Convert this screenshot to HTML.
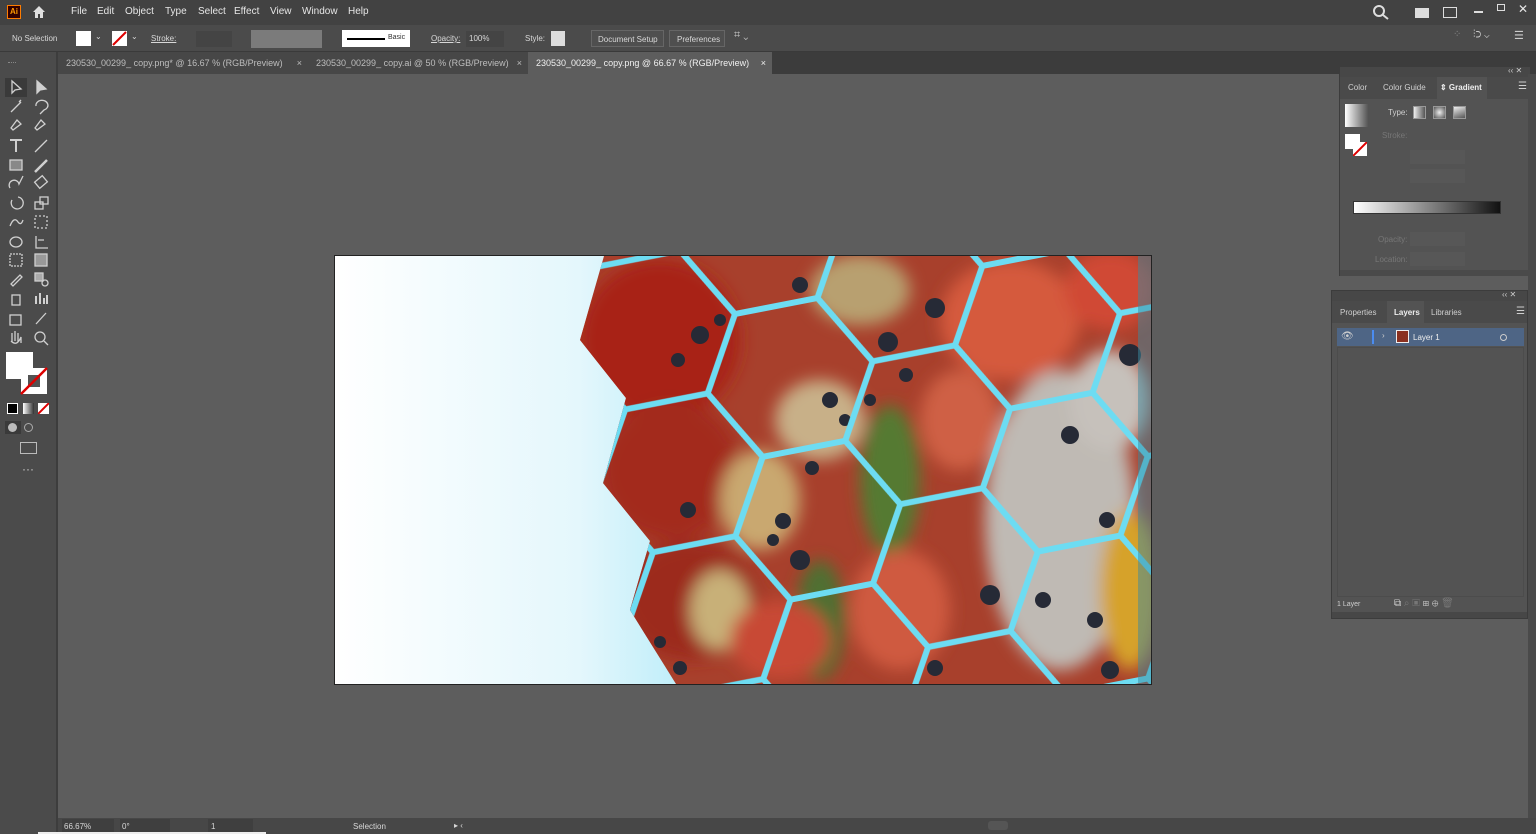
<!DOCTYPE html>
<html><head><meta charset="utf-8"><style>
*{box-sizing:border-box;margin:0;padding:0}
body{width:1536px;height:834px;overflow:hidden;background:#5d5d5d;font-family:"Liberation Sans",sans-serif;color:#ddd;position:relative}
.abs{position:absolute}
#menu{left:0;top:0;width:1536px;height:25px;background:#424242}
#menu span{position:absolute;top:6px;font-size:10px;color:#e6e6e6}
#ctrl{left:0;top:25px;width:1536px;height:27px;background:#4b4b4b;border-bottom:1px solid #3a3a3a}
.t9{font-size:8px;color:#d8d8d8}
#tabs{left:58px;top:52px;width:1478px;height:22px;background:#3c3c3c}
.tab{position:absolute;top:0;height:22px;background:#474747;font-size:9px;color:#bdbdbd;padding:6px 8px;white-space:nowrap}
#tools{left:0;top:52px;width:58px;height:782px;background:#4b4b4b;border-right:2px solid #3d3d3d}
.panel{background:#535353;border:1px solid #3c3c3c}
.ptab{position:absolute;font-size:8px;color:#cfcfcf}
#status{left:58px;top:818px;width:1478px;height:16px;background:#474747}
</style></head><body>
<div id="menu" class="abs">
 <div class="abs" style="left:7px;top:5px;width:14px;height:14px;background:#330000;border:1px solid #ff7c00;"><div style="color:#ff9a00;font-size:8px;font-weight:bold;text-align:center;line-height:12px">Ai</div></div>
 <svg class="abs" style="left:31px;top:4px" width="16" height="16"><path d="M2 8 L8 2 L14 8 L12 8 L12 14 L9 14 L9 10 L7 10 L7 14 L4 14 L4 8Z" fill="#e0e0e0"/></svg>
 <span style="left:71px">File</span><span style="left:97px">Edit</span><span style="left:125px">Object</span><span style="left:165px">Type</span><span style="left:198px">Select</span><span style="left:234px">Effect</span><span style="left:270px">View</span><span style="left:302px">Window</span><span style="left:348px">Help</span>
 <svg class="abs" style="left:1372px;top:4px" width="18" height="16"><circle cx="7" cy="7" r="5" stroke="#ddd" stroke-width="2" fill="none"/><path d="M11 11 L16 15" stroke="#ddd" stroke-width="2"/></svg>
 <div class="abs" style="left:1415px;top:8px;width:14px;height:10px;background:#ddd"></div>
 <div class="abs" style="left:1443px;top:7px;width:14px;height:11px;border:1.5px solid #ddd"></div>
 <div class="abs" style="left:1474px;top:11px;width:9px;height:1.5px;background:#ddd"></div>
 <div class="abs" style="left:1497px;top:4px;width:8px;height:7px;border:1px solid #ddd"></div>
 <span style="left:1518px;top:2px;font-size:12px">✕</span>
</div>
<div id="ctrl" class="abs">
 <span class="abs t9" style="left:12px;top:9px">No Selection</span>
 <div class="abs" style="left:76px;top:6px;width:15px;height:15px;background:#fff"></div>
 <span class="abs t9" style="left:95px;top:7px">⌄</span>
 <svg class="abs" style="left:112px;top:6px" width="15" height="15"><rect width="15" height="15" fill="#fff"/><path d="M1 14 L14 1" stroke="#d00" stroke-width="2"/></svg>
 <span class="abs t9" style="left:131px;top:7px">⌄</span>
 <span class="abs t9" style="left:151px;top:9px;text-decoration:underline">Stroke:</span>
 <div class="abs" style="left:196px;top:6px;width:36px;height:16px;background:#444"></div>
 <div class="abs" style="left:251px;top:5px;width:71px;height:18px;background:#7b7b7b"></div>
 <div class="abs" style="left:342px;top:5px;width:68px;height:17px;background:#fff"><div style="position:absolute;left:5px;top:8px;width:38px;height:2px;background:#000"></div><span style="position:absolute;left:46px;top:4px;font-size:7px;color:#333">Basic</span></div>
 <span class="abs t9" style="left:431px;top:9px;text-decoration:underline">Opacity:</span>
 <div class="abs" style="left:466px;top:6px;width:38px;height:16px;background:#444"><span class="t9" style="position:absolute;left:3px;top:3px">100%</span></div>
 <span class="abs t9" style="left:525px;top:9px">Style:</span>
 <div class="abs" style="left:551px;top:6px;width:14px;height:15px;background:#ddd"></div>
 <div class="abs" style="left:591px;top:5px;width:73px;height:17px;border:1px solid #666;background:#4f4f4f"><span class="t9" style="position:absolute;left:6px;top:4px">Document Setup</span></div>
 <div class="abs" style="left:669px;top:5px;width:56px;height:17px;border:1px solid #666;background:#4f4f4f"><span class="t9" style="position:absolute;left:7px;top:4px">Preferences</span></div>
 <span class="abs" style="left:734px;top:4px;font-size:11px;color:#ccc">⌗ ⌄</span>
 <span class="abs" style="left:1453px;top:4px;font-size:10px;color:#888">⁘</span>
 <span class="abs" style="left:1473px;top:4px;font-size:10px;color:#ccc">⫶⊃ ⌄</span>
 <span class="abs" style="left:1514px;top:4px;font-size:11px;color:#ccc">☰</span>
</div>
<div id="tools" class="abs">
 <div class="abs" style="left:8px;top:10px;width:8px;height:2px;border-top:1px dotted #888"></div>
 <svg class="abs" style="left:0;top:24px" width="56" height="420" fill="none" stroke="#d0d0d0" stroke-width="1.3">
  <rect x="5" y="2" width="22" height="19" fill="#3a3a3a" stroke="none"/>
  <path d="M12 5 L12 17 L15 14 L21 13Z"/><path d="M37 5 L37 17 L40 14 L46 13Z" fill="#d0d0d0"/>
  <path d="M11 36 L21 26 M19 26 l2 -2"/><path d="M36 30 a6 5 0 1 1 8 4 l-4 4"/>
  <path d="M11 52 L17 44 L21 48 L13 54Z"/><path d="M35 52 L41 44 L45 48 L37 54Z"/>
  <path d="M10 64 H22 M16 64 V76" stroke-width="2"/><path d="M35 76 L47 64"/>
  <rect x="10" y="84" width="12" height="10" fill="#888"/><path d="M35 96 L47 84" stroke-width="2.5"/>
  <path d="M10 112 a5 5 0 1 1 9 -4 L23 100"/><rect x="36" y="102" width="10" height="8" transform="rotate(-40 41 106)"/>
  <path d="M12 124 a6 6 0 1 0 6 -3"/><rect x="35" y="126" width="8" height="7"/><rect x="40" y="121" width="8" height="7"/>
  <path d="M10 150 q4 -10 8 -4 q3 4 5 -2"/><rect x="35" y="140" width="12" height="12" stroke-dasharray="2 2"/>
  <ellipse cx="16" cy="166" rx="6" ry="5"/><path d="M36 160 v12 h12 M38 164 h6"/>
  <rect x="10" y="178" width="12" height="12" stroke-dasharray="2 1"/><rect x="35" y="178" width="12" height="12" fill="#999"/>
  <path d="M11 208 L20 199 L22 201 L13 210Z"/><rect x="35" y="197" width="8" height="8" fill="#aaa"/><circle cx="45" cy="207" r="3"/>
  <rect x="12" y="219" width="8" height="10"/><path d="M36 228 v-8 M40 228 v-11 M44 228 v-6 M47 228 v-9" stroke-width="2"/>
  <rect x="10" y="239" width="11" height="10"/><path d="M36 248 L46 237"/>
  <path d="M12 266 v-9 M15 265 v-10 M18 266 v-9 M21 267 v-6 q-4 10 -10 4"/><circle cx="40" cy="261" r="5"/><path d="M44 265 L48 269"/>
 </svg>
 <div class="abs" style="left:6px;top:300px;width:27px;height:27px;background:#fff"></div>
 <svg class="abs" style="left:20px;top:315px" width="28" height="28"><rect x="1" y="1" width="26" height="26" fill="#fff"/><rect x="8" y="8" width="12" height="12" fill="#535353"/><path d="M1 27 L27 1" stroke="#d00" stroke-width="2.5"/></svg>
 <div class="abs" style="left:7px;top:351px;width:11px;height:11px;border:1.5px solid #fff;background:#000"></div>
 <div class="abs" style="left:23px;top:351px;width:11px;height:11px;background:linear-gradient(90deg,#fff,#333)"></div>
 <svg class="abs" style="left:38px;top:351px" width="11" height="11"><rect width="11" height="11" fill="#fff"/><path d="M0 11 L11 0" stroke="#d00" stroke-width="2"/></svg>
 <div class="abs" style="left:5px;top:369px;width:16px;height:13px;background:#3a3a3a"></div>
 <div class="abs" style="left:8px;top:371px;width:9px;height:9px;border-radius:50%;background:#bbb"></div>
 <div class="abs" style="left:24px;top:371px;width:9px;height:9px;border-radius:50%;border:1px solid #aaa"></div>
 <div class="abs" style="left:20px;top:390px;width:17px;height:12px;border:1px solid #bbb"></div>
 <span class="abs" style="left:22px;top:410px;font-size:12px;color:#ccc">···</span>
</div>
<div id="tabs" class="abs">
 <div class="tab" style="left:0;width:250px">230530_00299_ copy.png* @ 16.67 % (RGB/Preview)<span style="position:absolute;right:6px">×</span></div>
 <div class="tab" style="left:250px;width:220px">230530_00299_ copy.ai @ 50 % (RGB/Preview)<span style="position:absolute;right:6px">×</span></div>
 <div class="tab" style="left:470px;width:244px;background:#5d5d5d;color:#f0f0f0">230530_00299_ copy.png @ 66.67 % (RGB/Preview)<span style="position:absolute;right:6px">×</span></div>
</div>

<svg class="abs" style="left:0;top:0" width="1536" height="834">
 <defs>
  <linearGradient id="bg" x1="0" x2="1"><stop offset="0" stop-color="#ffffff"/><stop offset="0.3" stop-color="#e4f7fc"/><stop offset="0.42" stop-color="#c0eef9"/><stop offset="1" stop-color="#9fe4f4"/></linearGradient>
  <clipPath id="fr"><path d="M604 256 L580 340 L626 398 L603 483 L650 541 L630 610 L676 684 L1151 684 L1151 256Z"/></clipPath>
  <filter id="bl"><feGaussianBlur stdDeviation="8"/></filter>
  <pattern id="hx" patternUnits="userSpaceOnUse" width="252" height="145.5" patternTransform="translate(735 314) rotate(-11) translate(-84 0)">
   <path d="M0 72.75 H42 L84 0 H168 L210 72.75 H252 M42 72.75 L84 145.5 H168 L210 72.75 M84 0 H168 M84 145.5 H168" stroke="#6ddcf2" stroke-width="6" fill="none"/>
  </pattern>
 </defs>
 <rect x="334" y="255" width="817" height="429" fill="url(#bg)"/>
 <g clip-path="url(#fr)">
  <rect x="570" y="250" width="590" height="440" fill="#a8402c"/>
  <g filter="url(#bl)">
   <ellipse cx="660" cy="340" rx="80" ry="80" fill="#a82219"/>
   <ellipse cx="670" cy="470" rx="70" ry="70" fill="#a32a1c"/>
   <ellipse cx="690" cy="600" rx="70" ry="60" fill="#9c2a1e"/>
   <ellipse cx="760" cy="500" rx="40" ry="50" fill="#c9a870"/>
   <ellipse cx="720" cy="610" rx="30" ry="40" fill="#c8b078"/>
   <ellipse cx="820" cy="420" rx="45" ry="40" fill="#c8b088"/>
   <ellipse cx="860" cy="290" rx="50" ry="35" fill="#b8a070"/>
   <ellipse cx="890" cy="480" rx="30" ry="75" fill="#557a30"/>
   <ellipse cx="820" cy="620" rx="25" ry="60" fill="#4f7030"/>
   <ellipse cx="780" cy="640" rx="50" ry="40" fill="#c84a36"/>
   <ellipse cx="900" cy="610" rx="50" ry="60" fill="#cf5a40"/>
   <ellipse cx="1010" cy="320" rx="70" ry="60" fill="#d55a3e"/>
   <ellipse cx="1110" cy="290" rx="45" ry="40" fill="#d04a34"/>
   <ellipse cx="1060" cy="520" rx="75" ry="150" fill="#bfbab4"/>
   <ellipse cx="1110" cy="400" rx="40" ry="50" fill="#c6c1bb"/>
   <ellipse cx="1130" cy="590" rx="30" ry="80" fill="#d6a22c"/>
   <ellipse cx="960" cy="420" rx="40" ry="50" fill="#cf6044"/>
  </g>
  <g fill="#262a36">
   <circle cx="700" cy="335" r="9"/><circle cx="678" cy="360" r="7"/><circle cx="720" cy="320" r="6"/><circle cx="800" cy="285" r="8"/><circle cx="888" cy="342" r="10"/><circle cx="935" cy="308" r="10"/><circle cx="906" cy="375" r="7"/><circle cx="830" cy="400" r="8"/><circle cx="845" cy="420" r="6"/><circle cx="783" cy="521" r="8"/><circle cx="800" cy="560" r="10"/><circle cx="773" cy="540" r="6"/><circle cx="688" cy="510" r="8"/><circle cx="1070" cy="435" r="9"/><circle cx="1130" cy="355" r="11"/><circle cx="990" cy="595" r="10"/><circle cx="1107" cy="520" r="8"/><circle cx="1043" cy="600" r="8"/><circle cx="1095" cy="620" r="8"/><circle cx="1110" cy="670" r="9"/><circle cx="935" cy="668" r="8"/><circle cx="680" cy="668" r="7"/><circle cx="660" cy="642" r="6"/><circle cx="812" cy="468" r="7"/><circle cx="870" cy="400" r="6"/>
  </g>
  <rect x="570" y="250" width="590" height="440" fill="url(#hx)"/>
  <rect x="1138" y="256" width="13" height="428" fill="#3a8aa0" opacity="0.5"/>
 </g>
 <rect x="334.5" y="255.5" width="817" height="429" fill="none" stroke="#222" stroke-width="1"/>
</svg>

<div class="abs panel" style="left:1339px;top:66px;width:192px;height:210px">
 <div class="abs" style="left:0;top:0;width:190px;height:10px;background:#474747"></div>
 <span class="abs" style="left:168px;top:-1px;font-size:8px;color:#ccc">‹‹ ✕</span>
 <div class="abs" style="left:0;top:10px;width:190px;height:22px;background:#4a4a4a"></div>
 <span class="ptab" style="left:8px;top:16px">Color</span>
 <span class="ptab" style="left:43px;top:16px">Color Guide</span>
 <div class="abs" style="left:97px;top:10px;width:50px;height:22px;background:#535353"></div>
 <span class="ptab" style="left:100px;top:16px;color:#eee;font-weight:bold">⇕ Gradient</span>
 <span class="ptab" style="left:178px;top:14px;font-size:10px">☰</span>
 <div class="abs" style="left:5px;top:37px;width:23px;height:23px;background:linear-gradient(90deg,#fff,#555)"></div>
 <div class="abs" style="left:5px;top:67px;width:15px;height:15px;background:#fff"></div>
 <svg class="abs" style="left:13px;top:75px" width="14" height="14"><rect width="14" height="14" fill="#fff"/><path d="M0 14 L14 0" stroke="#d00" stroke-width="2"/></svg>
 <span class="ptab" style="left:48px;top:41px">Type:</span>
 <div class="abs" style="left:73px;top:39px;width:13px;height:13px;border:1px solid #999;background:linear-gradient(90deg,#eee,#555)"></div>
 <div class="abs" style="left:93px;top:39px;width:13px;height:13px;border:1px solid #999;background:radial-gradient(#eee,#555)"></div>
 <div class="abs" style="left:113px;top:39px;width:13px;height:13px;border:1px solid #999;background:linear-gradient(160deg,#eee,#555)"></div>
 <span class="ptab" style="left:42px;top:64px;color:#777">Stroke:</span>
 <div class="abs" style="left:70px;top:83px;width:55px;height:14px;background:#575757"></div>
 <div class="abs" style="left:70px;top:102px;width:55px;height:14px;background:#575757"></div>
 <div class="abs" style="left:13px;top:134px;width:148px;height:13px;background:linear-gradient(90deg,#fff,#111);border:1px solid #333"></div>
 <span class="ptab" style="left:38px;top:168px;color:#777">Opacity:</span>
 <span class="ptab" style="left:35px;top:188px;color:#777">Location:</span>
 <div class="abs" style="left:70px;top:165px;width:55px;height:14px;background:#575757"></div>
 <div class="abs" style="left:70px;top:185px;width:55px;height:14px;background:#575757"></div>
 <div class="abs" style="left:0;top:203px;width:190px;height:6px;background:#4a4a4a"></div>
</div>
<div class="abs panel" style="left:1331px;top:290px;width:197px;height:329px">
 <div class="abs" style="left:0;top:0;width:195px;height:10px;background:#474747"></div>
 <span class="abs" style="left:170px;top:-1px;font-size:8px;color:#ccc">‹‹ ✕</span>
 <div class="abs" style="left:0;top:10px;width:195px;height:22px;background:#4a4a4a"></div>
 <span class="ptab" style="left:8px;top:17px">Properties</span>
 <div class="abs" style="left:55px;top:10px;width:37px;height:22px;background:#535353"></div>
 <span class="ptab" style="left:62px;top:17px;color:#eee;font-weight:bold">Layers</span>
 <span class="ptab" style="left:99px;top:17px">Libraries</span>
 <span class="ptab" style="left:184px;top:15px;font-size:10px">☰</span>
 <div class="abs" style="left:5px;top:37px;width:187px;height:18px;background:#4e6585"></div>
 <span class="ptab" style="left:9px;top:40px;font-size:10px">👁︎</span>
 <div class="abs" style="left:40px;top:39px;width:2px;height:14px;background:#4b8cf0"></div>
 <span class="ptab" style="left:50px;top:40px">›</span>
 <div class="abs" style="left:64px;top:39px;width:13px;height:13px;background:#8a3020;border:1px solid #eee"></div>
 <span class="ptab" style="left:81px;top:42px;color:#eee">Layer 1</span>
 <div class="abs" style="left:168px;top:43px;width:7px;height:7px;border:1px solid #ccc;border-radius:50%"></div>
 <div class="abs" style="left:5px;top:56px;width:187px;height:250px;border:1px solid #4c4c4c"></div>
 <span class="ptab" style="left:5px;top:310px;font-size:7px">1 Layer</span>
 <span class="ptab" style="left:62px;top:307px;font-size:10px">⧉ <span style="color:#777">⌕ ▣</span> ⊞ ⊕ <span style="color:#777">🗑︎</span></span>
 <div class="abs" style="left:0;top:321px;width:195px;height:6px;background:#474747"></div>
</div>
<div class="abs" style="left:1528px;top:74px;width:8px;height:744px;background:#4a4a4a"></div>
<div id="status" class="abs">
 <div class="abs" style="left:4px;top:1px;width:52px;height:14px;background:#3f3f3f"><span class="t9" style="position:absolute;left:2px;top:3px">66.67%</span></div>
 <div class="abs" style="left:62px;top:1px;width:50px;height:14px;background:#3f3f3f"><span class="t9" style="position:absolute;left:2px;top:3px">0°</span></div>
 <div class="abs" style="left:150px;top:1px;width:45px;height:14px;background:#3f3f3f"><span class="t9" style="position:absolute;left:3px;top:3px">1</span></div>
 <span class="abs t9" style="left:295px;top:4px">Selection</span>
 <span class="abs t9" style="left:396px;top:3px">▸ ‹</span>
 <div class="abs" style="left:930px;top:3px;width:20px;height:9px;background:#555;border-radius:3px"></div>
</div>
<div class="abs" style="left:38px;top:832px;width:228px;height:2px;background:#eee"></div>
</body></html>
